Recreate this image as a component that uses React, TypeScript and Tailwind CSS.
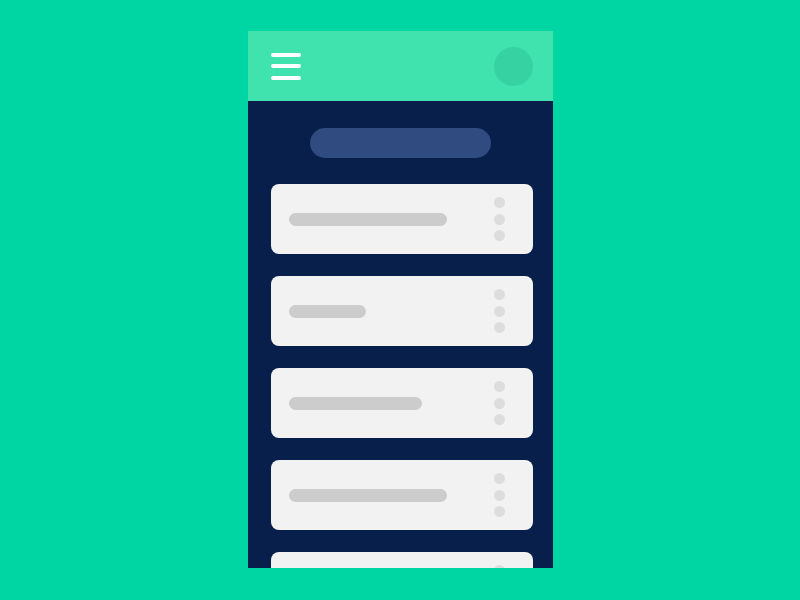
export default function App() {
  const bars = [158, 77, 133, 158, 120];

  return (
    <div className="w-full h-[600px] bg-[#00d6a4] flex justify-center pt-[31px] overflow-hidden">
      <div className="w-[305px] h-[537px] bg-[#081f4c] overflow-hidden flex flex-col">
        {/* Header */}
        <div className="h-[70px] shrink-0 bg-[#40e2ae] flex items-center justify-between pl-[23px] pr-[20px]">
          <div className="flex flex-col gap-[7.5px]">
            <span className="block w-[30px] h-[4px] rounded-full bg-white" />
            <span className="block w-[30px] h-[4px] rounded-full bg-white" />
            <span className="block w-[30px] h-[4px] rounded-full bg-white" />
          </div>
          <div className="w-[39px] h-[39px] rounded-full bg-[#37d2a2]" />
        </div>

        {/* Body */}
        <div className="flex flex-col pt-[27px]">
          <div className="mx-auto w-[181px] h-[30px] rounded-full bg-[#2f4b80]" />
          <div className="flex flex-col gap-[22px] mt-[26px] pl-[23px] pr-[20px]">
            {bars.map((w, i) => (
              <div
                key={i}
                className="h-[70px] shrink-0 rounded-[8px] bg-[#f2f2f2] flex items-center justify-between pl-[18px] pr-[28px]"
              >
                <div className="h-[13px] rounded-full bg-[#cccccc]" style={{ width: w }} />
                <div className="flex flex-col gap-[5.5px]">
                  <span className="block w-[11px] h-[11px] rounded-full bg-[#dddddd]" />
                  <span className="block w-[11px] h-[11px] rounded-full bg-[#dddddd]" />
                  <span className="block w-[11px] h-[11px] rounded-full bg-[#dddddd]" />
                </div>
              </div>
            ))}
          </div>
        </div>
      </div>
    </div>
  );
}
